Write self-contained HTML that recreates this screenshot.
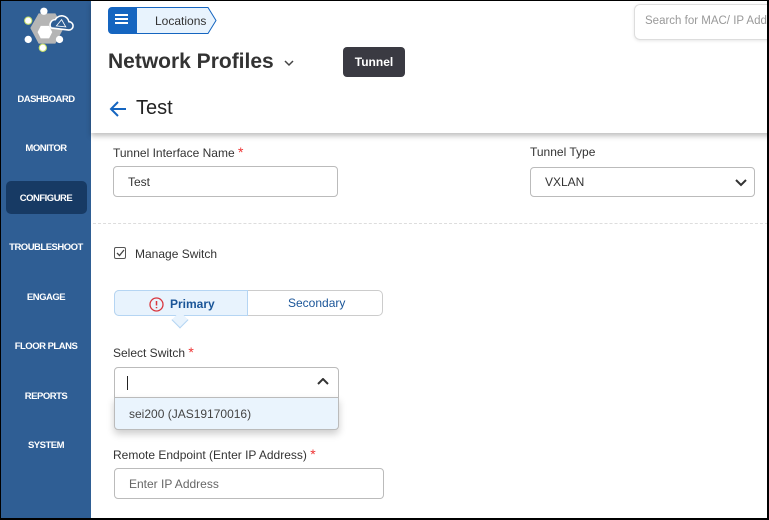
<!DOCTYPE html>
<html><head><style>
*{margin:0;padding:0;box-sizing:border-box}
body{width:769px;height:520px;overflow:hidden;background:#000;font-family:"Liberation Sans",sans-serif;position:relative}
.frame{position:absolute;left:1px;top:1px;width:766px;height:517px;background:#fff;overflow:hidden}
.side{position:absolute;left:0;top:0;width:90px;height:517px;background:#2f5e94}
.nav{position:absolute;left:0;width:90px;text-align:center;color:#fff;font-size:9.5px;font-weight:bold;letter-spacing:-0.5px}
.cfg{position:absolute;left:5px;top:180px;width:81px;height:33px;background:#173a64;border-radius:5px}
.abs{position:absolute}
.lbl{position:absolute;font-size:12px;color:#333}
.star{color:#e33;font-size:14px}
.inp{position:absolute;border:1px solid #bbb;border-radius:4px;background:#fff;font-size:12px;color:#333;padding-left:14px;display:flex;align-items:center}
</style></head><body><div class="frame">
<div class="side">
<svg class="abs" style="left:18px;top:4px" width="56" height="48" viewBox="0 0 52 46">
<polygon points="18,8 34,8 42,22 34,37 18,37 10,22" fill="#b5b5b5"/>
<polygon points="20,20 28,20 31,26 28,32 20,32 17,26" fill="#fff"/>
<circle cx="8" cy="15" r="3.5" fill="#fff" stroke="#c8e06a" stroke-width="1"/>
<circle cx="23" cy="6" r="3.5" fill="#fff"/>
<circle cx="8" cy="33" r="3.5" fill="#fff"/>
<circle cx="38" cy="33" r="3.5" fill="#fff"/>
<circle cx="22" cy="41" r="3.5" fill="#fff" stroke="#c8e06a" stroke-width="1"/>
<path d="M30,22 a5,5 0 0 1 4,-8 a7,7 0 0 1 13,2 a4,4 0 0 1 0,8 z" fill="#2f5e94" stroke="#fff" stroke-width="1.5"/>
<path d="M35,20 L40,14 L44,21 Z" fill="none" stroke="#fff" stroke-width="0.8"/>
</svg>
<div class="nav" style="top:93px">DASHBOARD</div>
<div class="nav" style="top:142px">MONITOR</div>
<div class="cfg"></div>
<div class="nav" style="top:192px">CONFIGURE</div>
<div class="nav" style="top:241px">TROUBLESHOOT</div>
<div class="nav" style="top:291px">ENGAGE</div>
<div class="nav" style="top:340px">FLOOR PLANS</div>
<div class="nav" style="top:390px">REPORTS</div>
<div class="nav" style="top:439px">SYSTEM</div>
</div>
<div class="abs" style="left:90px;top:0;width:680px;height:132px;background:#fff;box-shadow:0 3px 5px rgba(0,0,0,0.25)"></div>
<div class="abs" style="left:107px;top:6px;width:28px;height:27px;background:#1565c0;border-radius:4px 0 0 4px"></div>
<div class="abs" style="left:114px;top:13px;width:13px;height:1.5px;background:#fff;box-shadow:0 4px 0 #fff,0 8px 0 #fff"></div>
<svg class="abs" style="left:135px;top:6px" width="82" height="28"><path d="M0.5,0.5 H72 L80,13.5 L72,26.5 H0.5 Z" fill="#e8f3fd" stroke="#1565c0" stroke-width="1"/></svg>
<div class="abs" style="left:154px;top:13px;font-size:12px;color:#333">Locations</div>
<div class="abs" style="left:633px;top:3px;width:140px;height:36px;border:1px solid #ddd;border-radius:6px;box-shadow:0 1px 3px rgba(0,0,0,0.1)"></div>
<div class="abs" style="left:644px;top:14px;font-size:11.5px;color:#999;white-space:nowrap">Search for MAC/ IP Addre</div>
<div class="abs" style="left:107px;top:49px;font-size:21px;font-weight:bold;color:#333">Network Profiles</div>
<svg class="abs" style="left:283px;top:59px" width="10" height="7"><path d="M1,1 L5,5 L9,1" fill="none" stroke="#444" stroke-width="1.5"/></svg>
<div class="abs" style="left:342px;top:46px;width:62px;height:30px;background:#3a3a42;border-radius:4px;color:#fff;font-size:12px;font-weight:bold;text-align:center;line-height:30px">Tunnel</div>
<svg class="abs" style="left:107px;top:98px" width="20" height="20"><path d="M18,10 H3 M10,3 L3,10 L10,17" fill="none" stroke="#1565c0" stroke-width="2"/></svg>
<div class="abs" style="left:135px;top:96px;font-size:20px;color:#222">Test</div>
<div class="lbl" style="left:112px;top:143px">Tunnel Interface Name <span class="star">*</span></div>
<div class="inp" style="left:112px;top:165px;width:225px;height:31px">Test</div>
<div class="lbl" style="left:529px;top:144px">Tunnel Type</div>
<div class="inp" style="left:529px;top:166px;width:225px;height:30px">VXLAN</div>
<svg class="abs" style="left:734px;top:178px" width="12" height="8"><path d="M1,1 L6,6 L11,1" fill="none" stroke="#333" stroke-width="2"/></svg>
<div class="abs" style="left:92px;top:222px;width:680px;border-top:1px dashed #ddd"></div>
<div class="abs" style="left:113px;top:246px;width:12px;height:12px;border:1px solid #555;border-radius:2px"></div>
<svg class="abs" style="left:115px;top:248px" width="9" height="8"><path d="M1,4 L3.5,6.5 L8,1" fill="none" stroke="#444" stroke-width="1.3"/></svg>
<div class="lbl" style="left:134px;top:246px">Manage Switch</div>
<div class="abs" style="left:113px;top:289px;width:269px;height:26px;border:1px solid #ccc;border-radius:5px"></div>
<div class="abs" style="left:113px;top:289px;width:134px;height:26px;background:#e8f3fd;border:1px solid #b5d5f3;border-radius:5px 0 0 5px"></div>
<div class="abs" style="left:173px;top:313px;width:12px;height:12px;background:#e8f3fd;border-right:1px solid #b5d5f3;border-bottom:1px solid #b5d5f3;transform:rotate(45deg)"></div>
<svg class="abs" style="left:148px;top:296px" width="15" height="15"><circle cx="7.5" cy="7.5" r="6.5" fill="none" stroke="#d9363e" stroke-width="1.3"/><path d="M7.5,4 V8.5 M7.5,10 V11.3" stroke="#d9363e" stroke-width="1.5"/></svg>
<div class="abs" style="left:169px;top:296px;font-size:12px;font-weight:bold;color:#1a5598">Primary</div>
<div class="abs" style="left:287px;top:295px;font-size:12px;color:#1a5598">Secondary</div>
<div class="lbl" style="left:112px;top:343px">Select Switch <span class="star">*</span></div>
<div class="inp" style="left:113px;top:366px;width:225px;height:31px;border-radius:4px 4px 0 0"></div>
<div class="abs" style="left:126px;top:375px;width:1px;height:14px;background:#222"></div>
<svg class="abs" style="left:316px;top:377px" width="12" height="8"><path d="M1,6 L6,1 L11,6" fill="none" stroke="#333" stroke-width="2"/></svg>
<div class="inp" style="left:113px;top:396px;width:225px;height:33px;background:#eaf4fd;border-radius:0 0 4px 4px;box-shadow:0 4px 8px rgba(0,0,0,0.2);color:#444">sei200 (JAS19170016)</div>
<div class="lbl" style="left:112px;top:445px">Remote Endpoint (Enter IP Address) <span class="star">*</span></div>
<div class="inp" style="left:113px;top:467px;width:270px;height:31px;color:#666">Enter IP Address</div>
</div></body></html>
